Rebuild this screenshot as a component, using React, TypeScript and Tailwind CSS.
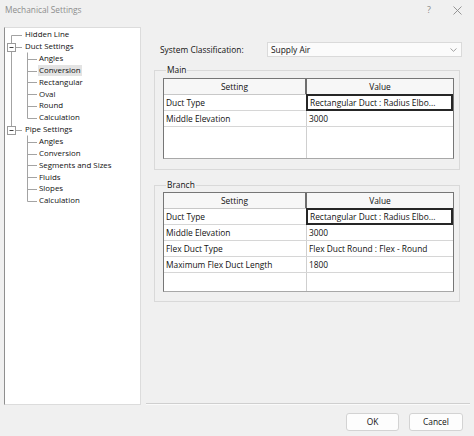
import React from "react";

const ROW = 11.85;

const tree: { label: string; level: 0 | 1; selected?: boolean }[] = [
  { label: "Hidden Line", level: 0 },
  { label: "Duct Settings", level: 0 },
  { label: "Angles", level: 1 },
  { label: "Conversion", level: 1, selected: true },
  { label: "Rectangular", level: 1 },
  { label: "Oval", level: 1 },
  { label: "Round", level: 1 },
  { label: "Calculation", level: 1 },
  { label: "Pipe Settings", level: 0 },
  { label: "Angles", level: 1 },
  { label: "Conversion", level: 1 },
  { label: "Segments and Sizes", level: 1 },
  { label: "Fluids", level: 1 },
  { label: "Slopes", level: 1 },
  { label: "Calculation", level: 1 },
];

function TreeLines() {
  const cy = (i: number) => Math.round(7 + i * ROW) + 0.5;
  const c = "#a3a3a3";
  const children = [2, 3, 4, 5, 6, 7, 9, 10, 11, 12, 13, 14];
  return (
    <svg className="absolute left-0 top-0 pointer-events-none" width="40" height="220">
      <line x1="6.5" y1={cy(0)} x2="6.5" y2={cy(8) - 4} stroke={c} />
      <line x1="6.5" y1={cy(0)} x2="17" y2={cy(0)} stroke={c} />
      {[1, 8].map((i) => (
        <g key={i}>
          <line x1="10.5" y1={cy(i)} x2="17" y2={cy(i)} stroke={c} />
          <rect x="2.5" y={cy(i) - 4} width="8" height="8" fill="#fff" stroke="#9a9a9a" />
          <line x1="4.5" y1={cy(i)} x2="8.5" y2={cy(i)} stroke="#444" />
        </g>
      ))}
      <line x1="22.5" y1={cy(1) + 5} x2="22.5" y2={cy(7)} stroke={c} />
      <line x1="22.5" y1={cy(8) + 5} x2="22.5" y2={cy(14)} stroke={c} />
      {children.map((i) => (
        <line key={i} x1="22.5" y1={cy(i)} x2="32" y2={cy(i)} stroke={c} />
      ))}
    </svg>
  );
}

function Table({ rows, height }: { rows: [string, string, boolean?][]; height: string }) {
  return (
    <div className={`flex flex-col bg-white border border-[#767676] border-b-[#a8a8a8] ${height}`}>
      <div className="flex h-[16px] shrink-0 border-b border-[#c8c8c8] bg-[#f7f7f7]">
        <div className="w-[143px] shrink-0 flex items-center justify-center border-r-2 border-[#6e6e6e]">Setting</div>
        <div className="flex-1 flex items-center justify-center">Value</div>
      </div>
      {rows.map(([a, b, sel], i) => (
        <div key={i} className="flex h-[16px] shrink-0 border-b border-[#d6d6d6]">
          <div className="w-[143px] shrink-0 flex items-center pl-[2px] border-r border-[#cfcfcf]">{a}</div>
          <div
            className={`flex-1 flex items-center pl-[2px] ${sel ? "border-2 border-[#262626] -mt-[1px] -mb-[1px] -ml-[1px]" : ""}`}
          >
            {b}
          </div>
        </div>
      ))}
      <div className="flex flex-1">
        <div className="w-[143px] shrink-0 border-r border-[#cfcfcf]" />
        <div className="flex-1" />
      </div>
    </div>
  );
}

export default function App() {
  return (
    <div
      className="w-[474px] h-[436px] bg-[#f0f0f0] flex flex-col text-[8.4px] leading-[10px] text-[#111111] overflow-hidden"
      style={{ fontFamily: '"Open Sans", "Noto Sans", sans-serif' }}
    >
      {/* Title bar */}
      <div className="h-[20px] shrink-0 flex items-center pl-[5px] pr-[12px] text-[8.3px] text-[#8d8d8d]">
        <span>Mechanical Settings</span>
        <span className="ml-auto mr-[22px] text-[9px] text-[#8a8a8a]">?</span>
        <svg width="9" height="9" viewBox="0 0 9 9">
          <path d="M0.5 0.5 L8.5 8.5 M8.5 0.5 L0.5 8.5" stroke="#8a8a8a" strokeWidth="0.9" />
        </svg>
      </div>

      <div className="flex flex-1">
        {/* Tree */}
        <div className="ml-[4px] mt-[7px] w-[137px] h-[378px] bg-white border border-[#dcdcdc] border-l-[#8f8f8f] relative text-[7.9px]">
          <TreeLines />
          <div className="flex flex-col pt-[1px]">
            {tree.map((t, i) => (
              <div key={i} className="flex items-center" style={{ height: ROW }}>
                <span
                  className={`${t.level === 0 ? "ml-[19px]" : "ml-[33px]"} px-[1px] leading-[11px] ${
                    t.selected ? "bg-[#e3e3e3]" : ""
                  }`}
                >
                  {t.label}
                </span>
              </div>
            ))}
          </div>
        </div>

        {/* Right */}
        <div className="flex-1 flex flex-col ml-[6px]">
          <div className="flex items-center mt-[22px] h-[15px] pl-[13px]">
            <span className="w-[107px]">System Classification:</span>
            <div className="w-[195px] h-[15px] bg-[#fbfbfb] border border-[#dadada] flex items-center pl-[3px] pr-[4px]">
              <span>Supply Air</span>
              <svg className="ml-auto" width="7" height="4" viewBox="0 0 7 4">
                <path d="M0.5 0.5 L3.5 3.3 L6.5 0.5" fill="none" stroke="#8a8a8a" strokeWidth="0.8" />
              </svg>
            </div>
          </div>

          <fieldset className="ml-[7px] w-[306px] mt-[8px] border border-[#d9d9d9] pl-[8px] pr-[5px] pb-[10px]">
            <legend className="ml-[3px] px-[1px]">Main</legend>
            <div className="mt-[3px]">
              <Table
                height="h-[81px]"
                rows={[
                  ["Duct Type", "Rectangular Duct : Radius Elbo...", true],
                  ["Middle Elevation", "3000"],
                ]}
              />
            </div>
          </fieldset>

          <fieldset className="ml-[7px] w-[306px] mt-[10px] border border-[#d9d9d9] pl-[8px] pr-[5px] pb-[9px]">
            <legend className="ml-[3px] px-[1px]">Branch</legend>
            <div className="mt-[2px]">
              <Table
                height="h-[100px]"
                rows={[
                  ["Duct Type", "Rectangular Duct : Radius Elbo...", true],
                  ["Middle Elevation", "3000"],
                  ["Flex Duct Type", "Flex Duct Round : Flex - Round"],
                  ["Maximum Flex Duct Length", "1800"],
                ]}
              />
            </div>
          </fieldset>

          <div className="mt-auto h-[2px] border-t border-[#cfcfcf] border-b border-b-[#fafafa] mr-[4px] -ml-[1px]" />
          <div className="flex justify-end gap-[10px] pr-[11px] pt-[8px] pb-[5px]">
            <button className="w-[53px] h-[18px] bg-[#fdfdfd] border border-[#d3d3d3] rounded-[3px] text-[8.4px]">OK</button>
            <button className="w-[54px] h-[18px] bg-[#fdfdfd] border border-[#d3d3d3] rounded-[3px] text-[8.4px]">Cancel</button>
          </div>
        </div>
      </div>
    </div>
  );
}
